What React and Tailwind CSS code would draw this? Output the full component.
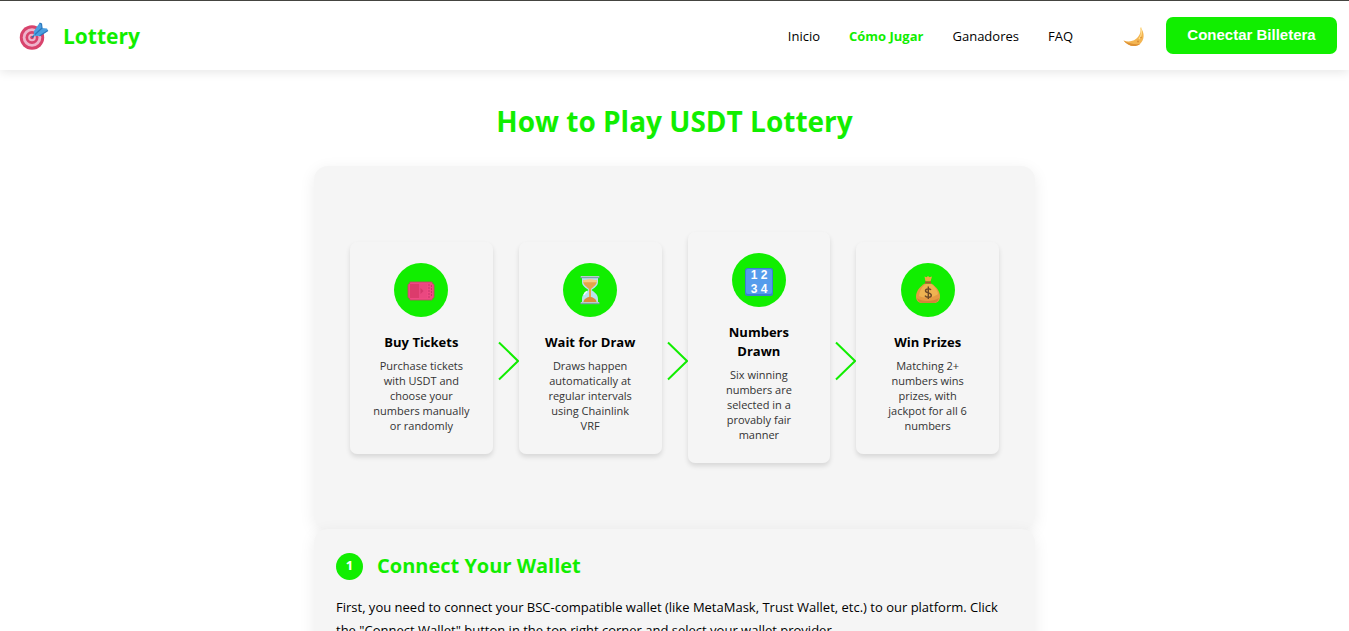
import clsx from 'clsx';

const navLinks = [
  { label: 'Inicio', href: '#inicio' },
  { label: 'Cómo Jugar', href: '#como-jugar', active: true },
  { label: 'Ganadores', href: '#ganadores' },
  { label: 'FAQ', href: '#faq' },
];

function TargetIcon() {
  return (
    <svg width="30" height="30" viewBox="0 0 30 30" aria-hidden="true">
      <circle cx="13" cy="16.5" r="12.2" fill="#d8436c" />
      <circle cx="13" cy="16.5" r="9.3" fill="#efb3cb" />
      <circle cx="13" cy="16.5" r="6.5" fill="#d8436c" />
      <circle cx="13" cy="16.5" r="3.8" fill="#efb3cb" />
      <circle cx="13" cy="16.5" r="1.8" fill="#d8436c" />
      <path d="M13 16.5 20 10" stroke="#2a6fa8" strokeWidth="1.6" />
      <path d="M14.500 15 15 10 20.500 2l2 1 .5 4 5 .5 1 2L20.500 15Z" fill="#4b9fe0" />
      <path d="M16 13.500 23.500 6.500M20.500 2l2 1 .5 4M29 9.500 20.500 15" stroke="#2b78bd" strokeWidth="1.200" fill="none" />
    </svg>
  );
}

function MoonIcon() {
  return (
    <svg width="22" height="22" viewBox="0 0 22 22" aria-hidden="true">
      <path d="M17.500 1.500C22 7 21.500 14 17 18 12 22 4.500 20 .5 14.500 6.500 16.500 12 15 15 11 17.300 8 18 5 17.500 1.500Z" fill="#f3b552" />
      <path d="M.5 14.500C4.500 20 12 22 17 18 12.500 18.500 5.500 18 .5 14.500Z" fill="#dd9135" />
      <path d="M17.800 1.500C19 6 18.500 10 16 13" stroke="#ffdc8b" strokeWidth="1.200" fill="none" />
      <circle cx="15" cy="15.500" r="1" fill="#d98d35" />
      <circle cx="18" cy="11.500" r=".8" fill="#d98d35" />
    </svg>
  );
}

function TicketIcon() {
  return (
    <svg width="28" height="28" viewBox="0 0 28 28" aria-hidden="true">
      <path d="M3 6h22q0 2 2 2.500v13q-2 .5-2 2.500H3q0-2-2-2.500v-13Q3 8 3 6Z" fill="#f04a83" />
      <path d="M3 8h9v14H3Z" fill="#dc3b6c" />
      <path d="M12 8h8v14h-8Z" fill="#ea4880" />
      <path d="m13.500 12 3 3-3 3Z" fill="#d4376c" />
      <path d="M22 8v14M24.500 9v12" stroke="#c5346a" strokeWidth="1" strokeDasharray="2 1" />
      <path d="M3 6h22q0 2 2 2.500v13q-2 .5-2 2.500H3q0-2-2-2.500v-13Q3 8 3 6Z" fill="none" stroke="#b84a5f" strokeWidth=".8" />
    </svg>
  );
}

function HourglassIcon() {
  return (
    <svg width="28" height="30" viewBox="0 0 28 30" aria-hidden="true">
      <path d="M6 3h16v4c0 4-4 6-6.500 8C18 17 22 19 22 24v3H6v-3c0-5 4-7 6.500-9C10 13 6 11 6 7Z" fill="#b9e2ef" />
      <path d="M7 5.500h14C21 10 17 12 15 14v10h-2V14C11 12 7 10 7 5.500Z" fill="#e5a549" />
      <path d="M7 5.500q7-3 14 0v1.800H7Z" fill="#f6ce83" />
      <path d="M7.500 27c0-3 4-5 6.500-5s6.500 2 6.500 5Z" fill="#dc8c38" />
      <path d="M8 20c.5-1.500 2-3 3-3.500" stroke="#f3fbff" strokeWidth="1.500" fill="none" />
      <path d="M4.500 1h19v2.200h-19ZM4.500 27h19v2.200h-19Z" fill="#7fa3a5" />
      <path d="M5 1.500h18M5 27.500h18" stroke="#c7d6d3" strokeWidth=".8" />
    </svg>
  );
}

function NumbersIcon() {
  return (
    <svg width="28" height="28" viewBox="0 0 28 28" className="mt-1" aria-hidden="true">
      <rect width="28" height="28" rx="2.500" fill="#3b7fd0" />
      <rect x="1" y="1" width="26" height="25" rx="2" fill="#559cec" />
      <g fill="#fff" fontFamily="Liberation Sans" fontWeight="700" fontSize="12" textAnchor="middle">
        <text x="9" y="11">1</text>
        <text x="19" y="11">2</text>
        <text x="9" y="25">3</text>
        <text x="19" y="25">4</text>
      </g>
    </svg>
  );
}

function MoneyBagIcon() {
  return (
    <svg width="28" height="30" viewBox="0 0 28 30" aria-hidden="true">
      <path d="M11 8.500h6c5 2.500 9 8 9 13 0 4-2.500 6.500-6 6.500H8c-3.500 0-6-2.500-6-6.500 0-5 4-10.500 9-13Z" fill="#e59a43" />
      <path d="M12 9h5c3.500 2 6.500 6 7 10-3 3-12 5-19 2 .5-5 3-9.500 7-12Z" fill="#efb351" />
      <path d="M3 23c4 4 16 4 22 0-1 3.500-3 5-5.500 5H8.500C5.500 28 3.500 26 3 23Z" fill="#d28439" />
      <path d="m10.500 1.500 2 .8L14 1l1.500 1.300 2.500-.8-1.500 5h-5Z" fill="#eda944" />
      <path d="M11 6.500h6v2h-6Z" fill="#a65a2f" />
      <path d="M17 15c-1-1.700-5.500-1.700-5.500.8 0 2.800 5.800 1.400 5.800 4.400 0 2.600-5 2.600-6.300.5M14.300 11.500v12.500" stroke="#6d4826" strokeWidth="1.400" fill="none" />
    </svg>
  );
}

const flow = [
  { title: 'Buy Tickets', text: 'Purchase tickets with USDT and choose your numbers manually or randomly', Icon: TicketIcon },
  { title: 'Wait for Draw', text: 'Draws happen automatically at regular intervals using Chainlink VRF', Icon: HourglassIcon },
  { title: 'Numbers Drawn', text: 'Six winning numbers are selected in a provably fair manner', Icon: NumbersIcon },
  { title: 'Win Prizes', text: 'Matching 2+ numbers wins prizes, with jackpot\u00a0for all 6 numbers', Icon: MoneyBagIcon },
];

function Navbar() {
  return (
    <header className="relative flex h-[70px] items-center justify-between border-t border-[#444440] bg-white pl-[19px] pr-3 shadow-[0_2px_10px_rgba(0,0,0,0.1)]">
      <a href="#inicio" className="flex items-center gap-[14px]">
        <TargetIcon />
        <span className="text-[21px] font-bold leading-[30px] text-[#11ee00]">Lottery</span>
      </a>

      <div className="flex items-center">
        <nav className="flex items-center gap-[29px]">
          {navLinks.map(link => (
            <a
              key={link.href}
              href={link.href}
              className={clsx('text-[13px] leading-5', link.active ? 'font-bold text-[#11ee00]' : 'text-black')}
            >
              {link.label}
            </a>
          ))}
        </nav>
        <button type="button" aria-label="Modo oscuro" className="ml-[50px] pt-[2px]">
          <MoonIcon />
        </button>
        <button
          type="button"
          className="ml-[21px] h-[37px] w-[171px] rounded-[7px] bg-[#11ee00] font-['Liberation_Sans',Arial,sans-serif] text-[15px] font-bold text-white"
        >
          Conectar Billetera
        </button>
      </div>
    </header>
  );
}

function FlowCard({ title, text, Icon }) {
  return (
    <li className="flex flex-1 flex-col items-center rounded-[7px] bg-[#f5f5f5] px-[22px] py-[21px] text-center shadow-[0_3px_5px_rgba(0,0,0,0.12)]">
      <div className="flex size-[54px] items-center justify-center rounded-full bg-[#11ee00]">
        <Icon />
      </div>
      <h3 className="mt-4 text-[13px] font-bold leading-[19px] text-black">{title}</h3>
      <p className="mt-[6px] text-[11px] leading-[15px] text-[#333333]">{text}</p>
    </li>
  );
}

function FlowArrow() {
  return (
    <li aria-hidden="true" className="flex w-[26px] justify-end pt-[26px]">
      <svg width="21" height="40" viewBox="0 0 21 40" fill="none" stroke="#11ee00" strokeWidth="2">
        <path d="M1 1.500 20 20 1 38.500" />
      </svg>
    </li>
  );
}

export default function App() {
  return (
    <div className="min-h-screen bg-white font-['Open_Sans','Noto_Sans',sans-serif]">
      <Navbar />

      <main className="mx-auto max-w-[721px] pt-[29px]">
        <h1 className="text-center text-[28px] font-bold leading-[44px] text-[#11ee00]">How to Play USDT Lottery</h1>

        {/* Flow overview */}
        <section className="mt-[23px] rounded-[14px] bg-[#f5f5f5] px-9 py-[66px] shadow-[0_4px_16px_rgba(0,0,0,0.08)]">
          <ol className="flex items-center">
            {flow.flatMap((step, i) => [
              i > 0 && <FlowArrow key={`arrow-${i}`} />,
              <FlowCard key={step.title} {...step} />,
            ])}
          </ol>
        </section>

        {/* Step 1 */}
        <section className="rounded-[14px] bg-[#f5f5f5] px-[22px] py-[22px] shadow-[0_4px_16px_rgba(0,0,0,0.08)]">
          <div className="flex items-center gap-[14px]">
            <span className="flex size-[27px] items-center justify-center rounded-full bg-[#11ee00] text-[13px] font-bold text-white">1</span>
            <h2 className="text-xl font-bold leading-[30px] text-[#11ee00]">Connect Your Wallet</h2>
          </div>
          <p className="mt-[15px] text-[13px] leading-[23px] text-black">
            First, you need to connect your BSC-compatible wallet (like MetaMask, Trust Wallet, etc.) to our platform. Click
            the "Connect Wallet" button in the top right corner and select your wallet provider.
          </p>
        </section>
      </main>
    </div>
  );
}
